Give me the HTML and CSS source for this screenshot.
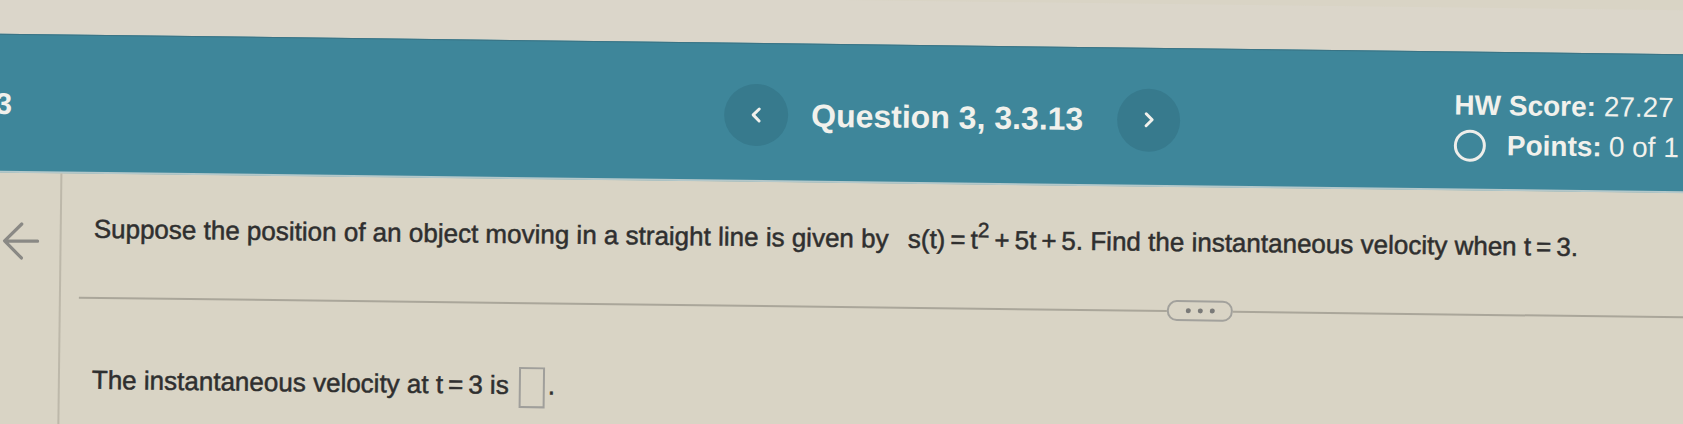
FILE: index.html
```html
<!DOCTYPE html>
<html lang="en">
<head>
<meta charset="utf-8">
<title>Question 3, 3.3.13</title>
<link rel="stylesheet" href="styles.css">
</head>
<body>
<div class="page">
  <header class="band">
    <div class="qnum">3</div>
    <nav class="qnav">
      <button class="navbtn" aria-label="Previous question">
        <svg width="14" height="18" viewBox="0 0 14 18"><polyline points="10,3 4,9 10,15" fill="none" stroke="#f1f1ec" stroke-width="3" stroke-linecap="round" stroke-linejoin="round"/></svg>
      </button>
      <h1 class="qtitle">Question 3, 3.3.13</h1>
      <button class="navbtn next" aria-label="Next question">
        <svg width="14" height="18" viewBox="0 0 14 18"><polyline points="4,3 10,9 4,15" fill="none" stroke="#f1f1ec" stroke-width="3" stroke-linecap="round" stroke-linejoin="round"/></svg>
      </button>
    </nav>
    <div class="spacer"></div>
    <div class="score">
      <div class="hw"><b>HW Score:</b> 27.27</div>
      <div class="points"><span class="ring"></span><b>Points:</b> 0 of 1</div>
    </div>
  </header>
  <main class="content">
    <aside class="rail">
      <svg class="back" width="38" height="44" viewBox="0 0 38 44"><path d="M36 22 H4 M20 5 L3 22 L20 39" fill="none" stroke="#8a8985" stroke-width="3.2" stroke-linecap="round" stroke-linejoin="round"/></svg>
    </aside>
    <section class="question">
      <p class="stem">Suppose the position of an object moving in a straight line is given by <span class="math first">s(t)<span class="op">=</span>t<sup>2</sup><span class="op">+</span>5t<span class="op">+</span>5</span>. Find the instantaneous velocity when <span class="math">t<span class="op">=</span>3</span>.</p>
      <div class="divider"><span class="rule left"></span><span class="pill"><i></i><i></i><i></i></span><span class="rule right"></span></div>
      <p class="answer">The instantaneous velocity at <span class="math">t<span class="op">=</span>3</span> is <span class="box"></span>.</p>
    </section>
  </main>
</div>
</body>
</html>
```
FILE: styles.css
```css
html {
  background: #d9d4c5;
}
body {
  margin: 0;
  width: 1683px;
  height: 424px;
  overflow: hidden;
  font-family: "Liberation Sans", Arial, Helvetica, sans-serif;
}
.page {
  display: flex;
  flex-direction: column;
  width: 1683px;
  height: 410px;
  margin-left: -40px;
  padding: 44px 40px 0;
  box-sizing: content-box;
  background: #dbd6ca;
  transform: rotate(0.7deg);
  transform-origin: 881px 212px;
}
.band {
  display: grid;
  grid-template-columns: 723px auto 1fr auto;
  align-items: center;
  flex: 0 0 136px;
  margin: 0 -40px;
  padding: 0 40px;
  background: #3e869a;
  border-top: 1px solid #3a7384;
  border-bottom: 2px solid #b4c8ca;
  color: #f1f1ec;
}
.qnum {
  margin-left: -6px;
  padding-top: 2px;
  font-size: 30px;
  font-weight: bold;
}
.qnav {
  display: flex;
  align-items: center;
  padding-top: 6px;
}
.navbtn {
  display: flex;
  align-items: center;
  justify-content: center;
  width: 64px;
  height: 62px;
  padding: 0;
  border: 0;
  border-radius: 50%;
  background: #377a8d;
}
.navbtn.next {
  width: 63px;
  height: 63px;
  margin-left: 34px;
}
.qtitle {
  margin: 0 0 0 23px;
  font-size: 32px;
  font-weight: bold;
  line-height: 40px;
}
.score {
  padding: 10px 5px 0 0;
  font-size: 28px;
  line-height: 40px;
}
.score b {
  font-weight: bold;
}
.points {
  display: flex;
  align-items: center;
}
.points b {
  margin-right: 7px;
}
.ring {
  width: 26px;
  height: 26px;
  margin-right: 21px;
  border: 3px solid #eeeeea;
  border-radius: 50%;
}
.content {
  display: flex;
  flex: 1;
  margin: 0 -40px;
  padding: 0 40px;
  background: #d9d4c5;
}
.rail {
  flex: 0 0 60px;
  border-right: 2px solid #bdb8aa;
}
.back {
  display: block;
  margin: 46px 0 0 2px;
}
.question {
  flex: 1;
  padding: 39px 0 0 32px;
  color: #2f2f2f;
  font-size: 26px;
  -webkit-text-stroke: 0.5px #2f2f2f;
}
.stem, .answer {
  margin: 0;
  line-height: 32px;
  white-space: nowrap;
}
.math .op {
  margin: 0 5px;
}
.math.first {
  margin-left: 12px;
}
.math sup {
  font-size: 0.8em;
  line-height: 0;
  vertical-align: 0.55em;
}
.divider {
  display: flex;
  align-items: center;
  margin: 42px -40px 0 -14px;
  -webkit-text-stroke: 0;
}
.rule {
  height: 2px;
  background: #aaa69a;
}
.rule.left {
  flex: 0 0 1088px;
}
.rule.right {
  flex: 1;
}
.pill {
  display: flex;
  align-items: center;
  justify-content: center;
  gap: 7px;
  width: 62px;
  height: 17px;
  border: 2px solid #a2a19c;
  border-radius: 10px;
}
.pill i {
  width: 5px;
  height: 5px;
  border-radius: 50%;
  background: #7a7a78;
}
.answer {
  margin-top: 50px;
  line-height: 44px;
}
.box {
  display: inline-block;
  width: 22px;
  height: 37px;
  margin: 0 3px 0 3px;
  border: 2px solid #a09f9b;
  vertical-align: middle;
  -webkit-text-stroke: 0;
}
```
